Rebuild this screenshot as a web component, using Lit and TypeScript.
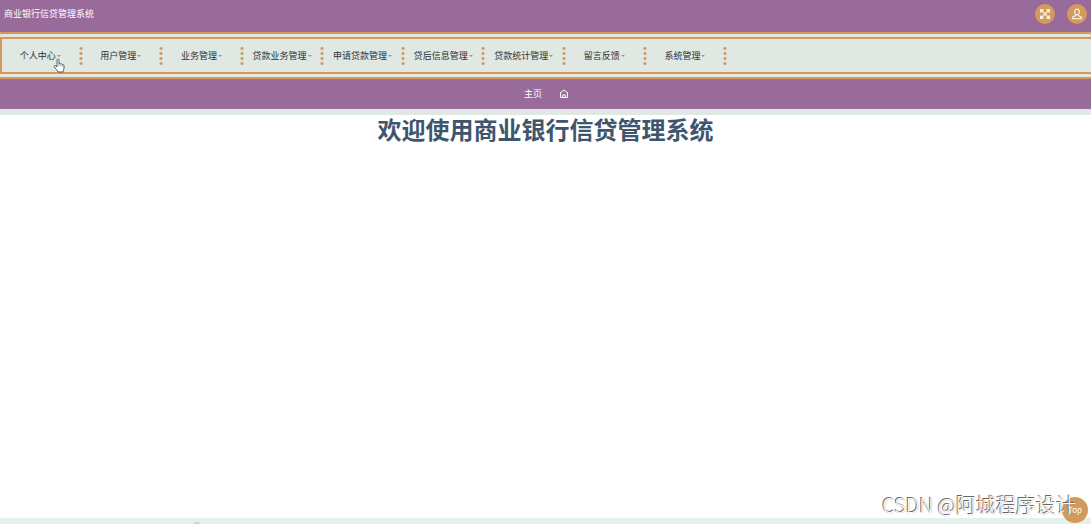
import { LitElement, html, css, svg } from "lit";
import { customElement } from "lit/decorators.js";

const MENU = [
  "个人中心",
  "用户管理",
  "业务管理",
  "贷款业务管理",
  "申请贷款管理",
  "贷后信息管理",
  "贷款统计管理",
  "留言反馈",
  "系统管理",
];

const expandIcon = svg`<path d="M2.500 2.500l7 7M9.500 2.500l-7 7" fill="none" stroke="currentColor" stroke-width="1.200"/>
  <path d="M1 1h3.400v1.800L2.800 4.400H1zM11 1v3.400H9.200L7.600 2.800V1zM1 11V7.600h1.800l1.600 1.600V11zM11 11H7.600V9.200l1.600-1.600H11z" fill="currentColor"/>`;

const userIcon = svg`<g fill="none" stroke="currentColor" stroke-width="1.200" stroke-linejoin="round">
  <ellipse cx="6" cy="4" rx="2.400" ry="2.800"/>
  <path d="M4.600 6.600v1L1.600 9v1.600h8.800V9l-3-1.400v-1"/></g>`;

const homeIcon = svg`<g fill="none" stroke="currentColor" stroke-width="1" stroke-linejoin="round">
  <path d="M1.800 5.200L6 2l4.200 3.200M2.600 4.800v4.700h6.800V4.800"/>
  <path d="M4.800 9.500V6.800h2.400v2.700"/></g>`;

@customElement("app-root")
export class AppRoot extends LitElement {
  static styles = css`
    :host {
      --purple: #996b9b;
      --orange: #d39a5e;
      --pale: #dfe8e3;
      display: flex;
      flex-direction: column;
      position: relative;
      min-height: 100vh;
      background: #fff;
      font-family: "Noto Sans CJK SC", sans-serif;
      font-size: 9px;
      line-height: 12px;
      overflow: hidden;
    }
    * {
      box-sizing: border-box;
    }
    button {
      font: inherit;
      border: 0;
      padding: 0;
      background: none;
      color: inherit;
      cursor: pointer;
    }
    .header {
      display: flex;
      align-items: center;
      justify-content: space-between;
      height: 32px;
      padding: 0 4px 4px;
      background: var(--purple);
      color: #fff;
    }
    .title {
      margin: 0;
      font-size: 9px;
      font-weight: 400;
    }
    .tools {
      display: flex;
      gap: 12px;
    }
    .round {
      display: flex;
      align-items: center;
      justify-content: center;
      width: 20px;
      height: 20px;
      border-radius: 50%;
      background: var(--orange);
      color: #fbeedd;
    }
    .icon {
      display: block;
      width: 12px;
      height: 12px;
    }
    .frame {
      padding: 3px 0;
      border: solid var(--orange);
      border-width: 2px 0;
      background: #e8e6dc;
    }
    .nav {
      border: 2px solid var(--orange);
      border-right: 0;
      background: var(--pale);
    }
    .menu {
      display: flex;
      margin: 0;
      padding: 0;
      list-style: none;
    }
    .item {
      flex: 0 0 7.4%;
      display: flex;
      align-items: center;
      height: 33px;
    }
    .item::after {
      content: "";
      width: 4px;
      height: 20px;
      background: radial-gradient(circle, var(--orange) 1px, transparent 2px) 0 0 / 4px 5px;
    }
    .entry {
      flex: 1;
      display: flex;
      align-items: center;
      justify-content: center;
      gap: 1px;
      white-space: nowrap;
      color: #303133;
    }
    .caret {
      border: 2px solid transparent;
      border-top-color: #909a98;
      border-bottom: 0;
    }
    .crumbs {
      display: flex;
      align-items: center;
      justify-content: center;
      gap: 16px;
      height: 30px;
      padding-left: 3px;
      background: var(--purple);
      color: #fff;
    }
    .crumbs a {
      color: inherit;
      text-decoration: none;
    }
    .main {
      flex: 1;
      border-top: 6px solid var(--pale);
    }
    .welcome {
      margin: 0;
      font-size: 24px;
      line-height: 28px;
      font-weight: 700;
      text-align: center;
      color: #3e566d;
    }
    .footer {
      height: 6px;
      background: #e4f0eb;
    }
    .pointer {
      position: absolute;
      left: 53px;
      top: 58px;
      width: 12px;
      height: 15px;
    }
    .spot {
      position: absolute;
      left: 192px;
      bottom: -8px;
      width: 10px;
      height: 10px;
      border-radius: 50%;
      background: #ecc9c4;
    }
    .top {
      position: absolute;
      right: 3px;
      bottom: 1px;
      width: 26px;
      height: 26px;
      border-radius: 50%;
      background: var(--orange);
      color: #fff;
      font-size: 8px;
    }
    .mark {
      position: absolute;
      right: 15px;
      bottom: 7px;
      font-size: 20px;
      line-height: 24px;
      font-weight: 300;
      white-space: nowrap;
      color: #fff;
      text-shadow: -1px -1px 0 #666, 0 0 1px #777;
      pointer-events: none;
    }
  `;

  private icon(shape: unknown) {
    return html`<svg class="icon" viewBox="0 0 12 12" aria-hidden="true">${shape}</svg>`;
  }

  render() {
    return html`
      <header class="header">
        <h2 class="title">商业银行信贷管理系统</h2>
        <div class="tools">
          <button class="round" aria-label="全屏">${this.icon(expandIcon)}</button>
          <button class="round" aria-label="用户">${this.icon(userIcon)}</button>
        </div>
      </header>
      <div class="frame">
        <nav class="nav">
          <ul class="menu">
            ${MENU.map(
              (name) => html`<li class="item">
                <button class="entry">${name}<span class="caret"></span></button>
              </li>`
            )}
          </ul>
        </nav>
      </div>
      <nav class="crumbs">
        <a href="#home">主页</a>
        <a href="#home" aria-label="首页">${this.icon(homeIcon)}</a>
      </nav>
      <main class="main">
        <h1 class="welcome">欢迎使用商业银行信贷管理系统</h1>
      </main>
      <footer class="footer"></footer>
      <span class="spot"></span>
      <button class="top">Top</button>
      <span class="mark">CSDN @阿城程序设计</span>
      <svg class="pointer" viewBox="0 0 12 15" aria-hidden="true">
        <path
          d="M4 9V2.2c0-1.6 2-1.6 2 0V6c.3-.8 1.6-.7 1.8.2.5-.6 1.6-.4 1.7.5.7-.4 1.5 0 1.5.8V10c0 1.300-.8 2-1 4H5c-.3-1.600-2.600-3.200-3.600-5.200C.8 7.500 2.300 7 3 8z"
          fill="#fff"
          stroke="#555b60"
          stroke-width="1"
          stroke-linejoin="round"
        />
        <path d="M6 6v2.500M7.800 6.300v2.200M9.500 6.800v2" stroke="#777" stroke-width=".6" />
      </svg>
    `;
  }
}
